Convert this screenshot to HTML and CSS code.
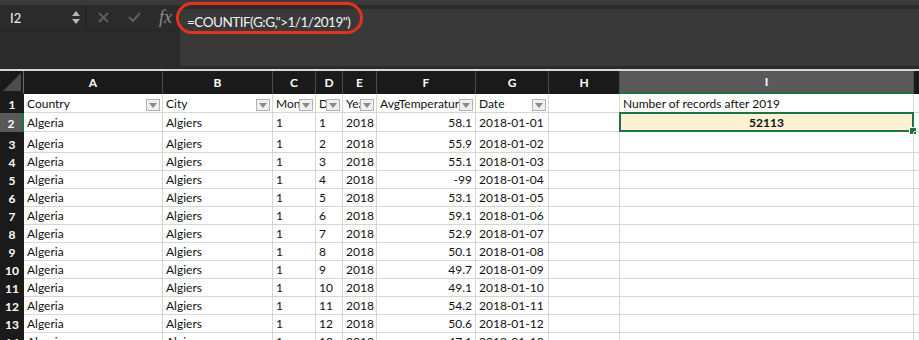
FILE: index.html
```html
<!DOCTYPE html>
<html lang="en">
<head>
  <meta charset="UTF-8" />
  <title>Weather records – COUNTIF</title>
  <link rel="stylesheet" href="styles.css">
</head>
<body>
  <div class="window">
    <div class="topstrip"></div>

    <div class="formula-bar">
      <div class="name-panel">
        <div class="name-row">
          <div class="name-box">
            <span class="cell-ref">I2</span>
            <span class="stepper"><i class="up"></i><i class="down"></i></span>
          </div>
          <div class="bar-icons">
            <svg class="icon" width="11" height="11" viewBox="0 0 11 11">
              <path d="M1.5 1.5 L9.5 9.5 M9.5 1.5 L1.5 9.5" stroke="#5f5f5f" stroke-width="2" fill="none" stroke-linecap="round"/>
            </svg>
            <svg class="icon" width="13" height="11" viewBox="0 0 13 11">
              <path d="M1.5 5.5 L5 9 L11.5 1.5" stroke="#5f5f5f" stroke-width="2" fill="none" stroke-linecap="round" stroke-linejoin="round"/>
            </svg>
            <span class="icon-fx">fx</span>
          </div>
        </div>
      </div>
      <div class="formula-input">
        <span class="formula-text">=COUNTIF(G:G,"&gt;1/1/2019")</span>
      </div>
      <div class="annotation"></div>
    </div>

    <div class="sheet">
      <div class="row head">
        <div class="corner"></div>
        <div class="col">A</div>
        <div class="col">B</div>
        <div class="col">C</div>
        <div class="col">D</div>
        <div class="col">E</div>
        <div class="col">F</div>
        <div class="col">G</div>
        <div class="col">H</div>
        <div class="col selected">I</div>
        <div class="col"></div>
      </div>

      <div class="row r1">
        <div class="num">1</div>
        <div class="cell filter">Country<b class="drop"></b></div>
        <div class="cell filter">City<b class="drop"></b></div>
        <div class="cell filter">Month<b class="drop"></b></div>
        <div class="cell filter">Day<b class="drop"></b></div>
        <div class="cell filter">Year<b class="drop"></b></div>
        <div class="cell filter">AvgTemperature<b class="drop"></b></div>
        <div class="cell filter">Date<b class="drop"></b></div>
        <div class="cell"></div>
        <div class="cell">Number of records after 2019</div>
        <div class="cell"></div>
      </div>

      <div class="row r2">
        <div class="num selected">2</div>
        <div class="cell">Algeria</div>
        <div class="cell">Algiers</div>
        <div class="cell">1</div>
        <div class="cell">1</div>
        <div class="cell">2018</div>
        <div class="cell right">58.1</div>
        <div class="cell">2018-01-01</div>
        <div class="cell"></div>
        <div class="cell active">52113</div>
        <div class="cell"></div>
      </div>

      <div class="row r3">
        <div class="num">3</div>
        <div class="cell">Algeria</div>
        <div class="cell">Algiers</div>
        <div class="cell">1</div>
        <div class="cell">2</div>
        <div class="cell">2018</div>
        <div class="cell right">55.9</div>
        <div class="cell">2018-01-02</div>
        <div class="cell"></div>
        <div class="cell"></div>
        <div class="cell"></div>
      </div>

      <div class="row">
        <div class="num">4</div>
        <div class="cell">Algeria</div>
        <div class="cell">Algiers</div>
        <div class="cell">1</div>
        <div class="cell">3</div>
        <div class="cell">2018</div>
        <div class="cell right">55.1</div>
        <div class="cell">2018-01-03</div>
        <div class="cell"></div>
        <div class="cell"></div>
        <div class="cell"></div>
      </div>

      <div class="row">
        <div class="num">5</div>
        <div class="cell">Algeria</div>
        <div class="cell">Algiers</div>
        <div class="cell">1</div>
        <div class="cell">4</div>
        <div class="cell">2018</div>
        <div class="cell right">-99</div>
        <div class="cell">2018-01-04</div>
        <div class="cell"></div>
        <div class="cell"></div>
        <div class="cell"></div>
      </div>

      <div class="row">
        <div class="num">6</div>
        <div class="cell">Algeria</div>
        <div class="cell">Algiers</div>
        <div class="cell">1</div>
        <div class="cell">5</div>
        <div class="cell">2018</div>
        <div class="cell right">53.1</div>
        <div class="cell">2018-01-05</div>
        <div class="cell"></div>
        <div class="cell"></div>
        <div class="cell"></div>
      </div>

      <div class="row">
        <div class="num">7</div>
        <div class="cell">Algeria</div>
        <div class="cell">Algiers</div>
        <div class="cell">1</div>
        <div class="cell">6</div>
        <div class="cell">2018</div>
        <div class="cell right">59.1</div>
        <div class="cell">2018-01-06</div>
        <div class="cell"></div>
        <div class="cell"></div>
        <div class="cell"></div>
      </div>

      <div class="row">
        <div class="num">8</div>
        <div class="cell">Algeria</div>
        <div class="cell">Algiers</div>
        <div class="cell">1</div>
        <div class="cell">7</div>
        <div class="cell">2018</div>
        <div class="cell right">52.9</div>
        <div class="cell">2018-01-07</div>
        <div class="cell"></div>
        <div class="cell"></div>
        <div class="cell"></div>
      </div>

      <div class="row">
        <div class="num">9</div>
        <div class="cell">Algeria</div>
        <div class="cell">Algiers</div>
        <div class="cell">1</div>
        <div class="cell">8</div>
        <div class="cell">2018</div>
        <div class="cell right">50.1</div>
        <div class="cell">2018-01-08</div>
        <div class="cell"></div>
        <div class="cell"></div>
        <div class="cell"></div>
      </div>

      <div class="row">
        <div class="num">10</div>
        <div class="cell">Algeria</div>
        <div class="cell">Algiers</div>
        <div class="cell">1</div>
        <div class="cell">9</div>
        <div class="cell">2018</div>
        <div class="cell right">49.7</div>
        <div class="cell">2018-01-09</div>
        <div class="cell"></div>
        <div class="cell"></div>
        <div class="cell"></div>
      </div>

      <div class="row">
        <div class="num">11</div>
        <div class="cell">Algeria</div>
        <div class="cell">Algiers</div>
        <div class="cell">1</div>
        <div class="cell">10</div>
        <div class="cell">2018</div>
        <div class="cell right">49.1</div>
        <div class="cell">2018-01-10</div>
        <div class="cell"></div>
        <div class="cell"></div>
        <div class="cell"></div>
      </div>

      <div class="row">
        <div class="num">12</div>
        <div class="cell">Algeria</div>
        <div class="cell">Algiers</div>
        <div class="cell">1</div>
        <div class="cell">11</div>
        <div class="cell">2018</div>
        <div class="cell right">54.2</div>
        <div class="cell">2018-01-11</div>
        <div class="cell"></div>
        <div class="cell"></div>
        <div class="cell"></div>
      </div>

      <div class="row">
        <div class="num">13</div>
        <div class="cell">Algeria</div>
        <div class="cell">Algiers</div>
        <div class="cell">1</div>
        <div class="cell">12</div>
        <div class="cell">2018</div>
        <div class="cell right">50.6</div>
        <div class="cell">2018-01-12</div>
        <div class="cell"></div>
        <div class="cell"></div>
        <div class="cell"></div>
      </div>

      <div class="row">
        <div class="num">14</div>
        <div class="cell">Algeria</div>
        <div class="cell">Algiers</div>
        <div class="cell">1</div>
        <div class="cell">13</div>
        <div class="cell">2018</div>
        <div class="cell right">47.1</div>
        <div class="cell">2018-01-13</div>
        <div class="cell"></div>
        <div class="cell"></div>
        <div class="cell"></div>
      </div>
    </div>
  </div>
</body>
</html>
```

FILE: styles.css
```css
* {
  margin: 0;
  padding: 0;
  box-sizing: border-box;
}

body {
  font-family: Lato, "Open Sans", sans-serif;
  background-color: #fff;
  width: 919px;
  height: 340px;
  overflow: hidden;
}

.window {
  width: 919px;
  height: 340px;
  overflow: hidden;
}

.topstrip {
  height: 5px;
  background-color: #3a3a3a;
}

/* formula bar */

.formula-bar {
  position: relative;
  display: flex;
  height: 66px;
  background-color: #2b2b2b;
  border-bottom: 2px solid #d6d6d6;
}

.name-panel {
  width: 180px;
}

.name-row {
  display: flex;
  height: 26px;
  border-bottom: 1px solid #242424;
}

.name-box {
  width: 86px;
  display: flex;
  align-items: center;
  justify-content: space-between;
  padding: 0 5px 0 10px;
  border-right: 1px solid #222;
}

.cell-ref {
  color: #f2f2f2;
  font-size: 13px;
}

.stepper {
  display: flex;
  flex-direction: column;
  gap: 3px;
}

.stepper i {
  display: block;
  width: 0;
  height: 0;
  border-left: 4px solid transparent;
  border-right: 4px solid transparent;
}

.stepper .up {
  border-bottom: 5px solid #b5b5b5;
}

.stepper .down {
  border-top: 5px solid #b5b5b5;
}

.bar-icons {
  flex: 1;
  display: flex;
  align-items: center;
  padding-left: 12px;
  gap: 19px;
}

.icon-fx {
  font-family: "Liberation Serif", serif;
  font-style: italic;
  font-size: 18px;
  color: #8c8c8c;
  margin-left: -1px;
}

.formula-input {
  flex: 1;
  margin: 4px 0 3px;
  background-color: #393939;
  padding: 2px 0 0 7px;
}

.formula-text {
  color: #f4f4f4;
  font-size: 13.5px;
  letter-spacing: -0.5px;
}

.annotation {
  position: absolute;
  left: 176px;
  top: -3px;
  width: 187px;
  height: 32px;
  border: 3px solid #e5321d;
  border-radius: 16px;
}

/* sheet grid */

.sheet {
  font-size: 12px;
  color: #111;
}

.row {
  display: grid;
  grid-template-columns: 24px 139px 110px 43px 27px 34px 99px 73px 71px 294px 60px;
  height: 18px;
}

.row.head {
  height: 23px;
  background-color: #1a1a1a;
}

.row.r1,
.row.r2 {
  height: 19px;
}

.row.r3 {
  height: 21px;
}

.corner {
  position: relative;
  border-right: 1px solid #6a6a6a;
  border-bottom: 1px solid #1a1a1a;
}

.corner::after {
  content: '';
  position: absolute;
  right: 2px;
  bottom: 2px;
  width: 0;
  height: 0;
  border-left: 18px solid transparent;
  border-bottom: 18px solid #4c4c4c;
}

.col {
  display: flex;
  align-items: center;
  justify-content: center;
  color: #fff;
  font-weight: bold;
  border-right: 1px solid #4a4a4a;
}

.col.selected {
  background-color: #595959;
  border-bottom: 2px solid #1f7246;
}

.num {
  display: flex;
  align-items: flex-end;
  justify-content: center;
  padding-bottom: 1px;
  background-color: #1a1a1a;
  color: #fff;
  font-weight: bold;
}

.num.selected {
  background-color: #595959;
  border-right: 2px solid #1f7246;
}

.cell {
  position: relative;
  display: flex;
  align-items: flex-end;
  padding: 0 3px 1px;
  border-right: 1px solid #d6d6d6;
  border-bottom: 1px solid #d6d6d6;
  white-space: nowrap;
  overflow: hidden;
}

.cell.right {
  justify-content: flex-end;
}

.drop {
  position: absolute;
  right: 2px;
  bottom: 1px;
  width: 14px;
  height: 12px;
  background-color: #efefef;
  border: 1px solid #b2b2b2;
  display: flex;
  align-items: center;
  justify-content: center;
}

.drop::after {
  content: '';
  width: 0;
  height: 0;
  border-left: 4px solid transparent;
  border-right: 4px solid transparent;
  border-top: 5px solid #8a8a8a;
}

.cell.active {
  overflow: visible;
  justify-content: center;
  font-weight: bold;
  background-color: #fdf0d3;
}

.cell.active::before {
  content: '';
  position: absolute;
  left: -1px;
  top: -1px;
  right: -1px;
  bottom: -1px;
  border: 2px solid #1f7246;
}

.cell.active::after {
  content: '';
  position: absolute;
  right: -4px;
  bottom: -4px;
  width: 6px;
  height: 6px;
  background-color: #1f7246;
  border: 1px solid #fff;
}
```
